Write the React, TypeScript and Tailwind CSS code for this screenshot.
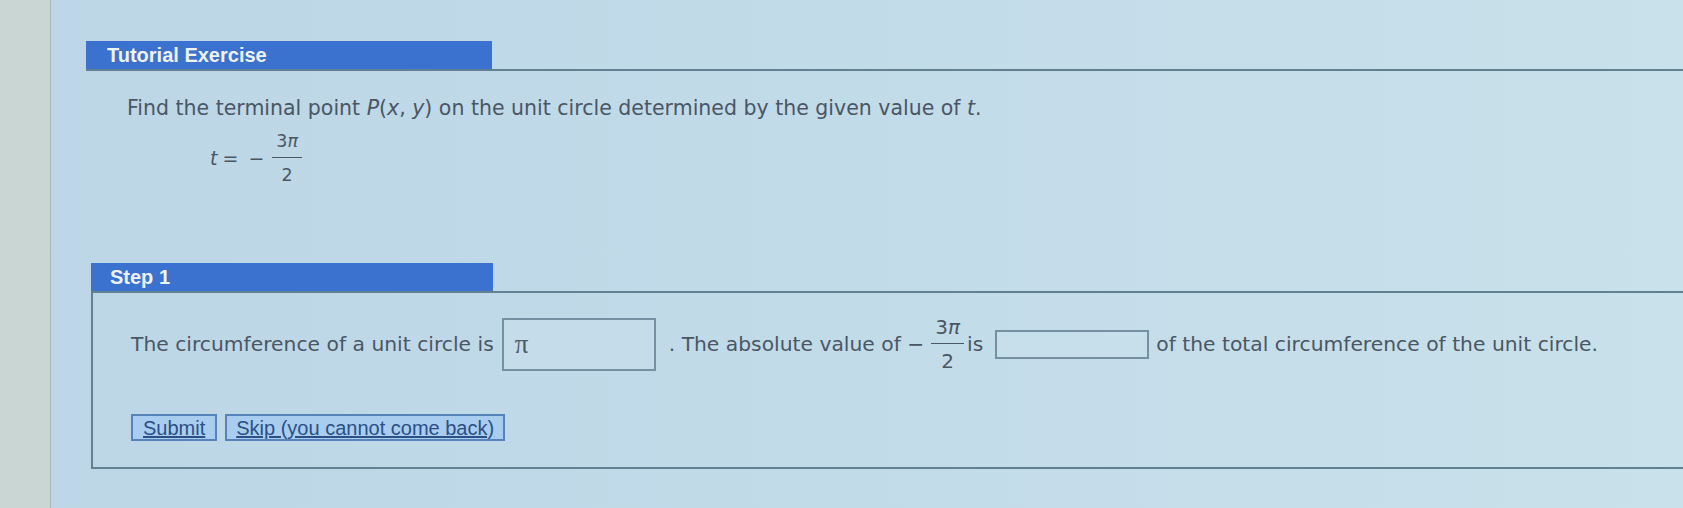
function Frac({ num, den, size }: { num: React.ReactNode; den: React.ReactNode; size: 'sm' | 'md' }) {
  return (
    <span className={`inline-flex flex-col items-center leading-[24px] ${size === 'sm' ? 'text-[17.5px]' : 'text-[20px]'}`}>
      <span className="px-[4px] pb-[4px]">{num}</span>
      <span className="w-full border-t border-[#4b5866]" />
      <span className="px-[4px] pt-[5px]">{den}</span>
    </span>
  )
}

export default function App() {
  return (
    <div className="flex h-[508px] w-[1683px] overflow-hidden bg-gradient-to-r from-[#bcd6e7] via-[#c2dbe9] to-[#c9e1ea] font-['DejaVu_Sans',sans-serif] text-[#4a5663]">
      {/* page edge */}
      <div className="w-[51px] shrink-0 border-r border-[#a9b8bc] bg-[#cad6d4]" />

      <div className="flex-1 pl-[35px] pt-[41px]">
        {/* Tutorial header */}
        <div className="flex border-b-2 border-[#637f92]">
          <div className="h-[28px] w-[406px] bg-[#3b71cf] pl-[21px] font-['Liberation_Sans',sans-serif] text-[20px] font-bold leading-[28px] text-[#eef3fb]">
            Tutorial Exercise
          </div>
        </div>

        <div className="pl-[41px] pt-[25px]">
          <p className="whitespace-nowrap text-[20.5px] leading-[24px]">
            Find the terminal point <i>P</i>(<i>x</i>, <i>y</i>) on the unit circle determined by the given value of <i>t</i>.
          </p>
          <div className="mt-[9px] flex items-center pl-[83px] text-[19px]">
            <i>t</i>
            <span className="ml-[5px] mr-[10px]">=</span>
            <span className="mr-[8px]">−</span>
            <Frac size="sm" num={<>3<i>π</i></>} den="2" />
          </div>
        </div>

        {/* Step 1 */}
        <div className="ml-[5px] mt-[76px]">
          <div className="flex">
            <div className="h-[28px] w-[402px] bg-[#3b71cf] pl-[19px] font-['Liberation_Sans',sans-serif] text-[20px] font-bold leading-[28px] text-[#eef3fb]">
              Step 1
            </div>
          </div>
          <div className="border-b-2 border-l-2 border-t-2 border-[#637f92] pb-[26px] pl-[38px] pt-[22px]">
            <div className="flex items-center whitespace-nowrap text-[20.3px] leading-[24px]">
              <span>The circumference of a unit circle is</span>
              <span className="ml-[8px] flex h-[53px] w-[154px] items-center border-2 border-[#7590a2] bg-[#c5ddea] pl-[11px] font-['Liberation_Serif',serif] text-[27px] text-[#4f5b66]">
                π
              </span>
              <span className="ml-[13px]">. The absolute value of −</span>
              <span className="ml-[7px]">
                <Frac size="md" num={<>3<i>π</i></>} den="2" />
              </span>
              <span className="ml-[3px]">is</span>
              <span className="ml-[12px] h-[29px] w-[154px] border-2 border-[#7590a2] bg-[#c7dfeb]" />
              <span className="ml-[7px]">of the total circumference of the unit circle.</span>
            </div>

            <div className="mt-[41px] flex items-center gap-[8px] font-['Liberation_Sans',sans-serif] text-[20px]">
              <button className="h-[27px] border-2 border-[#5583ba] bg-[#a8cdee] px-[10px] leading-none text-[#2c4f86] underline">
                Submit
              </button>
              <button className="h-[27px] border-2 border-[#5583ba] bg-[#a8cdee] px-[9px] leading-none text-[#2c4f86] underline">
                Skip (you cannot come back)
              </button>
            </div>
          </div>
        </div>
      </div>
    </div>
  )
}
